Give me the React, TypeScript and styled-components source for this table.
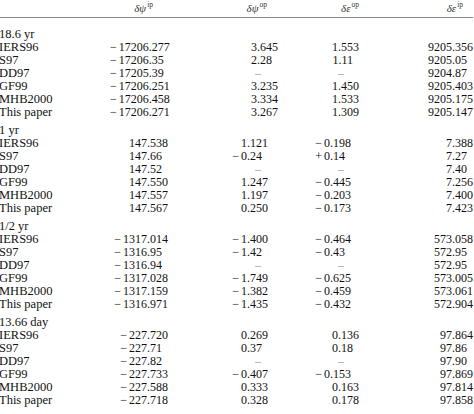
import React from 'react';
import styled, { createGlobalStyle } from 'styled-components';

const Global = createGlobalStyle`
  html, body { margin: 0; padding: 0; background: #fff; }
  body { font-family: "Liberation Serif", "Times New Roman", serif; color: #111; }
`;

const Table = styled.div`
  width: 474px;
  display: grid;
  grid-template-columns: 111px 58px 110px 81px 114px;
  margin-left: -1px;
  font-size: 12px;
  line-height: 13px;
`;

const HeadCell = styled.div<{ $pr: number }>`
  height: 17px;
  border-bottom: 1px solid #8a8a8a;
  text-align: right;
  padding-right: ${(p) => p.$pr}px;
  font-size: 11px;
  line-height: 16px;
  white-space: nowrap;
  color: #333;
`;

const Sym = styled.i`
  font-style: italic;
`;

const Sup = styled.sup`
  font-size: 7.5px;
  vertical-align: 5px;
  line-height: 0;
  margin-left: 1px;
`;

const Spacer = styled.div<{ $h: number }>`
  grid-column: 1 / -1;
  height: ${(p) => p.$h}px;
`;

const GroupLabel = styled.div`
  grid-column: 1 / -1;
  height: 13px;
  font-size: 12.5px;
  white-space: nowrap;
`;

const Label = styled.div`
  height: 13px;
  font-size: 12.5px;
  white-space: nowrap;
`;

const NumCell = styled.div<{ $nudge: number }>`
  height: 13px;
  text-align: right;
  padding-right: ${(p) => p.$nudge}px;
  white-space: nowrap;
`;

const Sign = styled.span`
  margin-right: 2px;
`;

const Pad = styled.span`
  visibility: hidden;
`;

const Dash = styled.span`
  color: #a0a0a0;
`;

type Row = [string, string, string, string, string];
type Group = { label: string; rows: Row[]; c3: number };

const groups: Group[] = [
  {
    label: '18.6 yr',
    c3: 0,
    rows: [
      ['IERS96', '−17206.277', '3.645', '1.553', '9205.356'],
      ['S97', '−17206.35', '2.28', '1.11', '9205.05'],
      ['DD97', '−17205.39', '–', '–', '9204.87'],
      ['GF99', '−17206.251', '3.235', '1.450', '9205.403'],
      ['MHB2000', '−17206.458', '3.334', '1.533', '9205.175'],
      ['This paper', '−17206.271', '3.267', '1.309', '9205.147'],
    ],
  },
  {
    label: '1 yr',
    c3: 10,
    rows: [
      ['IERS96', '147.538', '1.121', '−0.198', '7.388'],
      ['S97', '147.66', '−0.24', '+0.14', '7.27'],
      ['DD97', '147.52', '–', '–', '7.40'],
      ['GF99', '147.550', '1.247', '−0.445', '7.256'],
      ['MHB2000', '147.557', '1.197', '−0.203', '7.400'],
      ['This paper', '147.567', '0.250', '−0.173', '7.423'],
    ],
  },
  {
    label: '1/2 yr',
    c3: 10,
    rows: [
      ['IERS96', '−1317.014', '−1.400', '−0.464', '573.058'],
      ['S97', '−1316.95', '−1.42', '−0.43', '572.95'],
      ['DD97', '−1316.94', '–', '–', '572.95'],
      ['GF99', '−1317.028', '−1.749', '−0.625', '573.005'],
      ['MHB2000', '−1317.159', '−1.382', '−0.459', '573.061'],
      ['This paper', '−1316.971', '−1.435', '−0.432', '572.904'],
    ],
  },
  {
    label: '13.66 day',
    c3: 10,
    rows: [
      ['IERS96', '−227.720', '0.269', '0.136', '97.864'],
      ['S97', '−227.71', '0.37', '0.18', '97.86'],
      ['DD97', '−227.82', '–', '–', '97.90'],
      ['GF99', '−227.733', '−0.407', '−0.153', '97.869'],
      ['MHB2000', '−227.588', '0.333', '0.163', '97.814'],
      ['This paper', '−227.718', '0.328', '0.178', '97.858'],
    ],
  },
];

function Value({ v }: { v: string }) {
  const signed = v[0] === '−' || v[0] === '+';
  const body = signed ? v.slice(1) : v;
  const decimals = body.split('.')[1]?.length ?? 0;
  return (
    <>
      {signed && <Sign>{v[0]}</Sign>}
      {body}
      {decimals === 2 && <Pad>0</Pad>}
    </>
  );
}

function Cell({ v, nudge, dashPad }: { v: string; nudge: number; dashPad: number }) {
  if (v === '–') {
    return (
      <NumCell $nudge={dashPad}>
        <Dash>–</Dash>
      </NumCell>
    );
  }
  return (
    <NumCell $nudge={nudge}>
      <Value v={v} />
    </NumCell>
  );
}

const Header = ({ sym, sup, pr }: { sym: string; sup: string; pr: number }) => (
  <HeadCell $pr={pr}>
    <Sym>{sym}</Sym>
    <Sup>{sup}</Sup>
  </HeadCell>
);

export default function App() {
  return (
    <>
      <Global />
      <Table>
        <HeadCell $pr={0} />
        <Header sym="δψ" sup="ip" pr={15} />
        <Header sym="δψ" sup="op" pr={11} />
        <Header sym="δε" sup="op" pr={0} />
        <Header sym="δε" sup="ip" pr={10} />
        {groups.map((g, gi) => (
          <React.Fragment key={g.label}>
            <Spacer $h={gi === 0 ? 10 : 5} />
            <GroupLabel>{g.label}</GroupLabel>
            {g.rows.map((r) => (
              <React.Fragment key={r[0]}>
                <Label>{r[0]}</Label>
                <Cell v={r[1]} nudge={0} dashPad={0} />
                <Cell v={r[2]} nudge={g.c3} dashPad={17} />
                <Cell v={r[3]} nudge={r[3][0] === '−' || r[3][0] === '+' ? 8 : 0} dashPad={15} />
                <Cell v={r[4]} nudge={0} dashPad={0} />
              </React.Fragment>
            ))}
          </React.Fragment>
        ))}
      </Table>
    </>
  );
}
